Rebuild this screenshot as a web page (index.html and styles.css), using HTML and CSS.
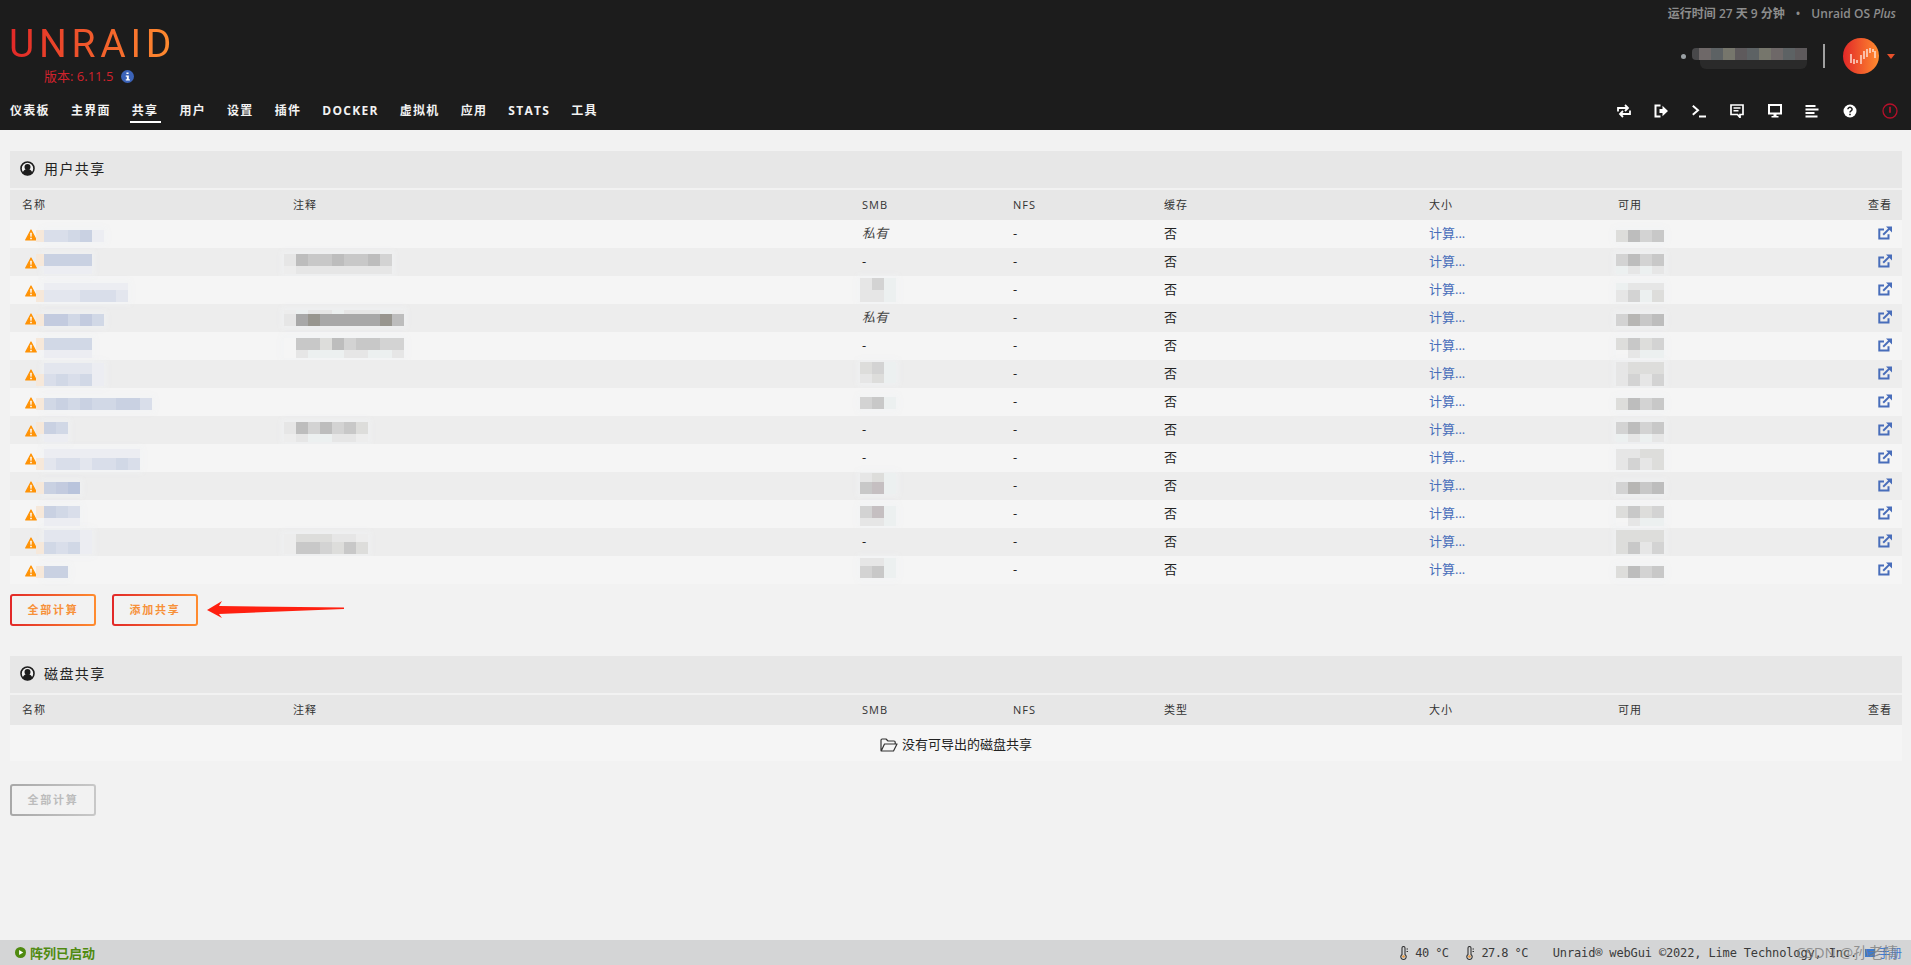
FILE: index.html
```html
<!DOCTYPE html>
<html lang="zh">
<head>
<meta charset="utf-8">
<title>Unraid 共享</title>
<link rel="stylesheet" href="styles.css">
</head>
<body>
<svg class="defs" width="0" height="0" aria-hidden="true">
  <defs>
    <symbol id="warn" viewBox="0 0 12 12"><path d="M6 1 11.3 11H.7z" fill="#ff9307" stroke="#ff9307" stroke-width="1.2" stroke-linejoin="round"/><path d="M5.2 3.8h1.6l-.2 4H5.4zM5.2 8.7h1.6v1.5H5.2z" fill="#fff"/></symbol>
    <symbol id="ext" viewBox="0 0 14 14"><path d="M10.5 8.2V12.5H1.3V3.5H6" fill="none" stroke="#486dba" stroke-width="2"/><path d="M5.2 8.8 11.6 2.4" fill="none" stroke="#486dba" stroke-width="2"/><path d="M8 .4h6v6z" fill="#486dba"/></symbol>
    <symbol id="user" viewBox="0 0 15 15"><circle cx="7.5" cy="7.5" r="6.5" fill="#f2f2f2" stroke="#1d1d1d" stroke-width="1.6"/><circle cx="7.5" cy="6" r="3" fill="#1d1d1d"/><path d="M2.8 12a4.7 4 0 0 1 9.4 0 6 6 0 0 1-9.4 0z" fill="#1d1d1d"/></symbol>
  </defs>
</svg>

<header class="hdr">
  <div class="hdr-top">
    <div class="brand">
      <div class="logo">UNRAID</div>
      <div class="ver">版本: 6.11.5
        <svg class="ver-i" viewBox="0 0 12 12"><circle cx="6" cy="6" r="6" fill="#3b63b8"/><path d="M5 2.2h2v1.6H5zM4.4 5h2.8v3.6h1v1.2H4.4V8.6h1V6.2h-1z" fill="#fff"/></svg>
      </div>
    </div>
    <div class="hdr-right">
      <div class="uptime"><span>运行时间 27 天 9 分钟</span><span class="dot">•</span><span>Unraid OS <em>Plus</em></span></div>
      <div class="server">
        <span class="srv-dot"></span>
        <div class="srv-name">
          <div class="mr"><i class="d0 half"></i><i class="d1"></i><i class="d2"></i><i class="d3"></i><i class="d4"></i><i class="d2"></i><i class="d3"></i><i class="d1"></i><i class="d2"></i><i class="d4"></i></div>
          <div class="srv-smear"></div>
        </div>
        <span class="srv-sep"></span>
        <svg class="avatar" viewBox="0 0 36 36">
          <defs><linearGradient id="ag" x1="0" x2="1" y1="0" y2="0"><stop offset="0" stop-color="#e22828"/><stop offset="1" stop-color="#ff8c2f"/></linearGradient></defs>
          <circle cx="18" cy="18" r="18" fill="url(#ag)"/>
          <path d="M8 16v9M11 21v5M14 22v3M18 17v9M21 13v8M24 11v8M27 10v5M30 11v3M32 13v7" stroke="#ffe6da" stroke-width="1.4" fill="none"/>
        </svg>
        <span class="caret"></span>
      </div>
    </div>
  </div>
  <div class="hdr-nav">
    <nav class="nav">
      <a>仪表板</a><a>主界面</a><a class="on">共享</a><a>用户</a><a>设置</a><a>插件</a><a>DOCKER</a><a>虚拟机</a><a>应用</a><a>STATS</a><a>工具</a>
    </nav>
    <div class="tools">
      <svg viewBox="0 0 14 14"><path d="M1 7.5V4h9M8 1 11 4 8 7M13 6.500V10H4M6 7 3 10l3 3" fill="none" stroke="#fff" stroke-width="1.8"/></svg>
      <svg viewBox="0 0 14 14"><path d="M6.500 1.500H1.500v11h5" fill="none" stroke="#fff" stroke-width="2"/><path d="M5.500 5H8.500V1.800L14 7 8.500 12.200V9H5.500z" fill="#fff"/></svg>
      <svg viewBox="0 0 14 14"><path d="M.8 1.800 6 6.300.8 10.800" fill="none" stroke="#fff" stroke-width="2"/><path d="M7 12.500h7" stroke="#fff" stroke-width="2"/></svg>
      <svg viewBox="0 0 14 14"><path d="M1 1h12v9.500H10v3L7.500 10.500H1z" fill="none" stroke="#fff" stroke-width="1.700"/><path d="M3.500 4h7M3.500 6.800h5" stroke="#fff" stroke-width="1.400"/></svg>
      <svg viewBox="0 0 14 14"><path d="M1 1h12v8.500H1z" fill="none" stroke="#fff" stroke-width="2"/><path d="M5.500 10h3v2h-3zM3.500 12h7v1.500h-7z" fill="#fff"/></svg>
      <svg viewBox="0 0 14 14"><path d="M.5 2h10M.5 5.500h13M.5 9h9M.5 12.500h12" stroke="#fff" stroke-width="2.200"/></svg>
      <svg viewBox="0 0 14 14"><circle cx="7" cy="7" r="6.500" fill="#fff"/><path d="M4.900 5.300a2.100 1.900 0 1 1 3.200 1.600C7.300 7.400 7 7.700 7 8.600" fill="none" stroke="#1c1c1c" stroke-width="1.500"/><path d="M6.200 9.700h1.600v1.500H6.200z" fill="#1c1c1c"/></svg>
      <svg viewBox="0 0 16 16"><circle cx="8" cy="8" r="7" fill="none" stroke="#b5102a" stroke-width="1.300"/><path d="M8 3.800v6" stroke="#b5102a" stroke-width="1.800"/></svg>
    </div>
  </div>
</header>

<main class="main">
  <section class="sec">
    <h2 class="title"><svg class="title-i"><use href="#user"/></svg>用户共享</h2>
    <table class="tbl">
      <colgroup><col class="c1"><col class="c2"><col class="c3"><col class="c3"><col class="c5"><col class="c6"><col class="c7"></colgroup>
      <thead><tr><th>名称</th><th>注释</th><th>SMB</th><th>NFS</th><th>缓存</th><th>大小</th><th>可用</th><th class="r">查看</th></tr></thead>
      <tbody>
        <tr>
          <td><div class="nm"><svg class="warn"><use href="#warn"/></svg><div class="mz t10"><div class="mr pe"><i class="a4"></i><i class="a4"></i><i class="a3"></i><i class="a2"></i><i class="a6"></i></div></div></div></td>
          <td></td><td><em>私有</em></td><td>-</td><td>否</td><td><a class="lnk">计算...</a></td>
          <td class="tp"><div class="mz av t10"><div class="mr"><i class="g5"></i><i class="g2"></i><i class="g4"></i><i class="g3"></i></div></div></td>
          <td class="r"><svg class="ext"><use href="#ext"/></svg></td>
        </tr>
        <tr>
          <td><div class="nm"><svg class="warn"><use href="#warn"/></svg><div class="mz t6"><div class="mr pe"><i class="a2"></i><i class="a2"></i><i class="a2"></i><i class="a2"></i></div><div class="mr sm"><i class="a6"></i><i class="a6"></i><i class="a6"></i><i class="a6"></i></div></div></div></td>
          <td class="tp"><div class="mz cm t6"><div class="mr"><i class="g6"></i><i class="g2"></i><i class="g3"></i><i class="g3"></i><i class="g2"></i><i class="g3"></i><i class="g3"></i><i class="g2"></i><i class="g4"></i></div><div class="mr sm"><i class="no"></i><i class="g6"></i><i class="g6"></i><i class="g6"></i><i class="g6"></i><i class="g6"></i><i class="g6"></i><i class="g6"></i><i class="g6"></i></div></div></td>
          <td>-</td><td>-</td><td>否</td><td><a class="lnk">计算...</a></td>
          <td class="tp"><div class="mz av t6"><div class="mr"><i class="g4"></i><i class="g2"></i><i class="g4"></i><i class="g3"></i></div><div class="mr sm"><i class="g7"></i><i class="g6"></i><i class="g7"></i><i class="g6"></i></div></div></td>
          <td class="r"><svg class="ext"><use href="#ext"/></svg></td>
        </tr>
        <tr>
          <td><div class="nm"><svg class="warn"><use href="#warn"/></svg><div class="mz t7"><div class="mr sm7"><i class="a6"></i><i class="a6"></i><i class="a6"></i><i class="a6"></i><i class="a6"></i><i class="a6"></i><i class="a6"></i></div><div class="mr pe"><i class="a5"></i><i class="a5"></i><i class="a5"></i><i class="a4"></i><i class="a4"></i><i class="a4"></i><i class="a5"></i></div></div></div></td>
          <td></td>
          <td class="tp"><div class="mz sb t2"><div class="mr"><i class="g6"></i><i class="g4"></i><i class="g7"></i></div><div class="mr"><i class="g6"></i><i class="g6"></i><i class="g7"></i></div></div></td>
          <td>-</td><td>否</td><td><a class="lnk">计算...</a></td>
          <td class="tp"><div class="mz av t7"><div class="mr sm7"><i class="g7"></i><i class="g6"></i><i class="g6"></i><i class="g6"></i></div><div class="mr"><i class="g6"></i><i class="g4"></i><i class="g7"></i><i class="g5"></i></div></div></td>
          <td class="r"><svg class="ext"><use href="#ext"/></svg></td>
        </tr>
        <tr>
          <td><div class="nm"><svg class="warn"><use href="#warn"/></svg><div class="mz t10"><div class="mr pe"><i class="a1"></i><i class="a1"></i><i class="a3"></i><i class="a1"></i><i class="a3"></i></div></div></div></td>
          <td class="tp"><div class="mz cm t6"><div class="mr sm4"><i class="no"></i><i class="g7"></i><i class="g6"></i><i class="g6"></i><i class="g7"></i><i class="g6"></i><i class="g6"></i><i class="g6"></i><i class="g7"></i></div><div class="mr"><i class="g6"></i><i class="g1"></i><i class="g0"></i><i class="g1"></i><i class="g1"></i><i class="g1"></i><i class="g1"></i><i class="g1"></i><i class="g0"></i><i class="g2"></i></div></div></td>
          <td><em>私有</em></td><td>-</td><td>否</td><td><a class="lnk">计算...</a></td>
          <td class="tp"><div class="mz av t10"><div class="mr"><i class="g4"></i><i class="g1b"></i><i class="g3"></i><i class="g2"></i></div></div></td>
          <td class="r"><svg class="ext"><use href="#ext"/></svg></td>
        </tr>
        <tr>
          <td><div class="nm"><svg class="warn"><use href="#warn"/></svg><div class="mz t6"><div class="mr pe"><i class="a3"></i><i class="a3"></i><i class="a3"></i><i class="a3"></i></div><div class="mr sm"><i class="a6"></i><i class="a6"></i><i class="a6"></i><i class="a6"></i></div></div></div></td>
          <td class="tp"><div class="mz cm t6"><div class="mr"><i class="no"></i><i class="g3"></i><i class="g3"></i><i class="g5"></i><i class="g2"></i><i class="g4"></i><i class="g3"></i><i class="g3"></i><i class="g4"></i><i class="g4"></i></div><div class="mr sm"><i class="no"></i><i class="g6"></i><i class="g7"></i><i class="g7"></i><i class="g7"></i><i class="g6"></i><i class="g6"></i><i class="g7"></i><i class="g7"></i><i class="g6"></i></div></div></td>
          <td>-</td><td>-</td><td>否</td><td><a class="lnk">计算...</a></td>
          <td class="tp"><div class="mz av t6"><div class="mr"><i class="g5"></i><i class="g3"></i><i class="g5"></i><i class="g4"></i></div><div class="mr sm"><i class="no"></i><i class="g6"></i><i class="g7"></i><i class="g7"></i></div></div></td>
          <td class="r"><svg class="ext"><use href="#ext"/></svg></td>
        </tr>
        <tr>
          <td><div class="nm"><svg class="warn"><use href="#warn"/></svg><div class="mz t3"><div class="mr h11"><i class="a5"></i><i class="a5"></i><i class="a5"></i><i class="a5"></i><i class="a6"></i></div><div class="mr pe"><i class="a4"></i><i class="a3"></i><i class="a4"></i><i class="a3"></i><i class="a6"></i></div></div></div></td>
          <td></td>
          <td class="tp"><div class="mz sb t2"><div class="mr"><i class="g5"></i><i class="g4"></i><i class="g7"></i></div><div class="mr sm9"><i class="g6"></i><i class="g5"></i><i class="g7"></i></div></div></td>
          <td>-</td><td>否</td><td><a class="lnk">计算...</a></td>
          <td class="tp"><div class="mz av t2"><div class="mr"><i class="g6"></i><i class="g5"></i><i class="g5"></i><i class="g5"></i></div><div class="mr"><i class="g6"></i><i class="g4"></i><i class="g6"></i><i class="g4"></i></div></div></td>
          <td class="r"><svg class="ext"><use href="#ext"/></svg></td>
        </tr>
        <tr>
          <td><div class="nm"><svg class="warn"><use href="#warn"/></svg><div class="mz t10"><div class="mr pe"><i class="a3"></i><i class="a2"></i><i class="a3"></i><i class="a2"></i><i class="a3"></i><i class="a3"></i><i class="a2"></i><i class="a2"></i><i class="a4"></i></div></div></div></td>
          <td></td>
          <td class="tp"><div class="mz sb t9"><div class="mr"><i class="g4"></i><i class="g3"></i><i class="g7"></i></div></div></td>
          <td>-</td><td>否</td><td><a class="lnk">计算...</a></td>
          <td class="tp"><div class="mz av t10"><div class="mr"><i class="g5"></i><i class="g2"></i><i class="g4"></i><i class="g3"></i></div></div></td>
          <td class="r"><svg class="ext"><use href="#ext"/></svg></td>
        </tr>
        <tr>
          <td><div class="nm"><svg class="warn"><use href="#warn"/></svg><div class="mz t6"><div class="mr pe"><i class="a2"></i><i class="a3"></i></div><div class="mr sm"><i class="a6"></i><i class="a6"></i></div></div></div></td>
          <td class="tp"><div class="mz cm t6"><div class="mr"><i class="g6"></i><i class="g2"></i><i class="g4"></i><i class="g2"></i><i class="g4"></i><i class="g3"></i><i class="g5"></i></div><div class="mr sm"><i class="no"></i><i class="g6"></i><i class="g7"></i><i class="g7"></i><i class="g6"></i><i class="g6"></i></div></div></td>
          <td>-</td><td>-</td><td>否</td><td><a class="lnk">计算...</a></td>
          <td class="tp"><div class="mz av t6"><div class="mr"><i class="g4"></i><i class="g2"></i><i class="g4"></i><i class="g3"></i></div><div class="mr sm"><i class="g7"></i><i class="g6"></i><i class="g7"></i><i class="g6"></i></div></div></td>
          <td class="r"><svg class="ext"><use href="#ext"/></svg></td>
        </tr>
        <tr>
          <td><div class="nm"><svg class="warn"><use href="#warn"/></svg><div class="mz t5"><div class="mr sm9"><i class="a6"></i><i class="a6"></i><i class="a6"></i><i class="a6"></i><i class="a6"></i><i class="a6"></i><i class="a6"></i><i class="a6"></i></div><div class="mr pe"><i class="a5"></i><i class="a4"></i><i class="a4"></i><i class="a5"></i><i class="a4"></i><i class="a4"></i><i class="a3"></i><i class="a4"></i></div></div></div></td>
          <td></td>
          <td>-</td><td>-</td><td>否</td><td><a class="lnk">计算...</a></td>
          <td class="tp"><div class="mz av t5"><div class="mr sm9"><i class="g6"></i><i class="g6"></i><i class="g5"></i><i class="g5"></i></div><div class="mr"><i class="g6"></i><i class="g4"></i><i class="g6"></i><i class="g5"></i></div></div></td>
          <td class="r"><svg class="ext"><use href="#ext"/></svg></td>
        </tr>
        <tr>
          <td><div class="nm"><svg class="warn"><use href="#warn"/></svg><div class="mz t10"><div class="mr pe"><i class="a2"></i><i class="a1"></i><i class="a0"></i></div></div></div></td>
          <td></td>
          <td class="tp"><div class="mz sb t1"><div class="mr sm9"><i class="g6"></i><i class="g5"></i><i class="g7"></i></div><div class="mr"><i class="g3"></i><i class="g2b"></i><i class="g7"></i></div></div></td>
          <td>-</td><td>否</td><td><a class="lnk">计算...</a></td>
          <td class="tp"><div class="mz av t10"><div class="mr"><i class="g4"></i><i class="g1b"></i><i class="g3"></i><i class="g2"></i></div></div></td>
          <td class="r"><svg class="ext"><use href="#ext"/></svg></td>
        </tr>
        <tr>
          <td><div class="nm"><svg class="warn"><use href="#warn"/></svg><div class="mz t6"><div class="mr pe"><i class="a2"></i><i class="a3"></i><i class="a4"></i></div><div class="mr sm"><i class="a6"></i><i class="a6"></i><i class="a6"></i></div></div></div></td>
          <td></td>
          <td class="tp"><div class="mz sb t6"><div class="mr"><i class="g4"></i><i class="g2b"></i><i class="g7"></i></div><div class="mr sm"><i class="g6"></i><i class="g6"></i><i class="g7"></i></div></div></td>
          <td>-</td><td>否</td><td><a class="lnk">计算...</a></td>
          <td class="tp"><div class="mz av t6"><div class="mr"><i class="g5"></i><i class="g3"></i><i class="g5"></i><i class="g4"></i></div><div class="mr sm"><i class="no"></i><i class="g6"></i><i class="g7"></i><i class="g7"></i></div></div></td>
          <td class="r"><svg class="ext"><use href="#ext"/></svg></td>
        </tr>
        <tr>
          <td><div class="nm"><svg class="warn"><use href="#warn"/></svg><div class="mz t2"><div class="mr"><i class="a5"></i><i class="a5"></i><i class="a5"></i><i class="a6"></i></div><div class="mr pe"><i class="a3"></i><i class="a4"></i><i class="a3"></i><i class="a6"></i></div></div></div></td>
          <td class="tp"><div class="mz cm t6"><div class="mr sm"><i class="no"></i><i class="g5"></i><i class="g5"></i><i class="g5"></i><i class="g6"></i><i class="g6"></i></div><div class="mr"><i class="no"></i><i class="g3"></i><i class="g3"></i><i class="g4"></i><i class="g5"></i><i class="g3"></i><i class="g5"></i></div></div></td>
          <td>-</td><td>-</td><td>否</td><td><a class="lnk">计算...</a></td>
          <td class="tp"><div class="mz av t2"><div class="mr"><i class="g5"></i><i class="g5"></i><i class="g5"></i><i class="g5"></i></div><div class="mr"><i class="g5"></i><i class="g3"></i><i class="g6"></i><i class="g4"></i></div></div></td>
          <td class="r"><svg class="ext"><use href="#ext"/></svg></td>
        </tr>
        <tr>
          <td><div class="nm"><svg class="warn"><use href="#warn"/></svg><div class="mz t10"><div class="mr pe"><i class="a2"></i><i class="a2"></i></div></div></div></td>
          <td></td>
          <td class="tp"><div class="mz sb t2"><div class="mr sm"><i class="g6"></i><i class="g6"></i><i class="g7"></i></div><div class="mr"><i class="g4"></i><i class="g3"></i><i class="g7"></i></div></div></td>
          <td>-</td><td>否</td><td><a class="lnk">计算...</a></td>
          <td class="tp"><div class="mz av t10"><div class="mr"><i class="g5"></i><i class="g2"></i><i class="g4"></i><i class="g3"></i></div></div></td>
          <td class="r"><svg class="ext"><use href="#ext"/></svg></td>
        </tr>
      </tbody>
    </table>
    <div class="actions">
      <button class="btn">全部计算</button>
      <button class="btn">添加共享</button>
      <svg class="arrow" viewBox="0 0 138 18"><path d="M0 9 15 0 12 5 137 6.500V8L12 13 15 17z" fill="#ff2010"/></svg>
    </div>
  </section>

  <section class="sec sec2">
    <h2 class="title"><svg class="title-i"><use href="#user"/></svg>磁盘共享</h2>
    <table class="tbl">
      <colgroup><col class="c1"><col class="c2"><col class="c3"><col class="c3"><col class="c5"><col class="c6"><col class="c7"></colgroup>
      <thead><tr><th>名称</th><th>注释</th><th>SMB</th><th>NFS</th><th>类型</th><th>大小</th><th>可用</th><th class="r">查看</th></tr></thead>
      <tbody>
        <tr class="empty"><td colspan="8"><svg class="folder" viewBox="0 0 18 14"><path d="M1 12.800V2.200C1 1.500 1.500 1 2.200 1H6l2 2h6c.7 0 1.200.5 1.200 1.200V5.500M1.200 13H13.500L17 6H4.500z" fill="none" stroke="#333" stroke-width="1.200" stroke-linejoin="round"/></svg>没有可导出的磁盘共享</td></tr>
      </tbody>
    </table>
    <div class="actions act2"><button class="btn off" disabled>全部计算</button></div>
  </section>
</main>

<footer class="ftr">
  <div class="status">
    <svg class="play" viewBox="0 0 12 12"><circle cx="6" cy="6" r="6" fill="#4f8a10"/><path d="M4.500 3.200 9 6 4.500 8.800z" fill="#fff"/></svg>阵列已启动
  </div>
  <div class="ftr-right">
    <span class="temp"><svg class="therm" viewBox="0 0 8 14"><path d="M2 2a1.500 1.500 0 0 1 3 0v6.500a2.700 2.700 0 1 1-3 0z" fill="none" stroke="#333" stroke-width="1.100"/><circle cx="3.500" cy="10.500" r="1.300" fill="#e8963a"/><path d="M6.500 3h1.500M6.500 5.500h1.500" stroke="#333"/></svg><span>40 °C</span></span>
    <span class="temp"><svg class="therm" viewBox="0 0 8 14"><path d="M2 2a1.500 1.500 0 0 1 3 0v6.500a2.700 2.700 0 1 1-3 0z" fill="none" stroke="#333" stroke-width="1.100"/><circle cx="3.500" cy="10.500" r="1.300" fill="#e8963a"/><path d="M6.500 3h1.500M6.500 5.500h1.500" stroke="#333"/></svg><span>27.8 °C</span></span>
    <span class="copy">Unraid® webGui ©2022, Lime Technology, Inc.</span>
    <span class="manual"><svg class="book" viewBox="0 0 10 10"><path d="M0 1h10v8H0z" fill="#3f7bd0"/></svg>手册</span>
  </div>
  <span class="wm">CSDN @孙老情</span>
</footer>
</body>
</html>
```

FILE: styles.css
```css
* { box-sizing: border-box; }
html, body { margin: 0; padding: 0; height: 100%; }
body {
  width: 1911px;
  height: 965px;
  overflow: hidden;
  display: flex;
  flex-direction: column;
  background: #f2f2f2;
  color: #222;
  font-family: "Open Sans", "Noto Sans CJK SC", sans-serif;
  font-size: 13px;
}
.defs { position: absolute; }

/* header */
.hdr { height: 130px; background: #1c1c1c; flex: none; display: flex; flex-direction: column; }
.hdr-top { height: 100px; display: flex; justify-content: space-between; }
.brand { padding: 22px 0 0 9px; }
.logo {
  font-family: Roboto, "Open Sans", sans-serif;
  font-size: 39px;
  line-height: 44px;
  letter-spacing: 4.700px;
  width: 172px;
  background: linear-gradient(90deg, #e22828, #ff8c2f 95%);
  -webkit-background-clip: text;
  background-clip: text;
  color: transparent;
}
.ver {
  margin: 1px 0 0 35px;
  display: flex;
  align-items: center;
  gap: 8px;
  color: #d0222c;
  font-size: 13px;
  line-height: 18px;
  white-space: nowrap;
}
.ver-i { width: 13px; height: 13px; }
.hdr-right { display: flex; flex-direction: column; align-items: flex-end; padding: 6px 15px 0 0; }
.uptime { display: flex; gap: 9px; color: #8d8d8d; font-size: 12px; line-height: 16px; font-weight: 600; white-space: nowrap; }
.uptime .dot { margin: 0 2px; }
.server { display: flex; align-items: center; margin: 16px 1px 0 0; height: 36px; }
.srv-dot { width: 5px; height: 5px; border-radius: 50%; background: #9aa0a4; margin-right: 6px; }
.srv-name { width: 115px; height: 21px; align-self: flex-start; margin-top: 10px; }
.srv-smear { height: 9px; margin-left: 8px; background: #2a2a2a; border-radius: 0 0 6px 6px; }
.srv-sep { width: 2px; height: 24px; background: #a0a0a0; margin: 0 18px 0 16px; }
.avatar { width: 36px; height: 36px; }
.caret { width: 0; height: 0; border: 4px solid transparent; border-top: 5px solid #e8502a; border-bottom: 0; margin-left: 8px; }
.hdr-nav { height: 30px; display: flex; justify-content: space-between; align-items: flex-start; }
.nav { display: flex; gap: 21px; padding: 2px 0 0 10px; }
.nav a { position: relative; color: #f2f2f2; font-size: 12px; font-weight: 700; letter-spacing: 1.300px; line-height: 18px; white-space: nowrap; }
.nav a.on::after { content: ""; position: absolute; left: -2px; right: -3px; top: 19px; height: 2px; background: #fff; }
.tools { display: flex; gap: 23.700px; align-items: center; padding: 3px 13px 0 0; }
.tools svg { width: 14px; height: 14px; display: block; }
.tools svg:last-child { width: 16px; height: 16px; margin-left: 1.400px; }

/* main */
.main { flex: 1; padding: 21px 9px 0 10px; }
.sec2 { margin-top: 30px; }
.title {
  display: flex;
  align-items: center;
  height: 37px;
  margin: 0 0 2px;
  padding: 0 0 3px 10px;
  background: #e7e7e7;
  color: #222;
  font-size: 14px;
  font-weight: 400;
  letter-spacing: 1.400px;
}
.title-i { width: 15px; height: 15px; margin-right: 9px; }
.tbl { width: 100%; border-collapse: collapse; table-layout: fixed; }
.c1 { width: 271px; } .c2 { width: 569px; } .c3 { width: 151px; } .c5 { width: 265px; } .c6 { width: 189px; } .c7 { width: 150px; }
th {
  height: 30px;
  padding: 0 12px 2px;
  background: #e7e7e7;
  font-size: 11px;
  font-weight: 400;
  letter-spacing: 1px;
  text-align: left;
  color: #333;
}
td { height: 28px; padding: 0 12px 1px; line-height: 15px; vertical-align: middle; color: #222; }
td.tp, td:first-child { vertical-align: top; padding-bottom: 0; }
.r { text-align: right; }
th.r { padding-right: 10px; }
tbody tr:nth-child(odd) { background: #f5f5f5; }
tbody tr:nth-child(even) { background: #ededed; }
td em { font-style: italic; color: #444; }
.lnk { color: #486dba; }
.ext { width: 14px; height: 14px; display: block; margin: -1px -2px 0 auto; }
.nm { display: flex; height: 28px; align-items: flex-start; padding-left: 3px; }
.warn { width: 12px; height: 12px; flex: none; margin: 9px 7px 0 0; }

/* pixelated (redacted) cells */
.mz { display: flex; flex-direction: column; width: max-content; box-shadow: 0 0 5px 3px rgba(241, 242, 244, .55); }
.t1 { margin-top: 1px; } .t2 { margin-top: 2px; } .t3 { margin-top: 3px; } .t5 { margin-top: 5px; } .t6 { margin-top: 6px; } .t7 { margin-top: 7px; } .t9 { margin-top: 9px; } .t10 { margin-top: 10px; }
.cm { margin-left: -9px; }
.sb, .av { margin-left: -2px; }
.mr { display: flex; height: 12px; position: relative; }
.mr.sm { height: 8px; } .mr.sm7 { height: 7px; } .mr.sm4 { height: 4px; } .mr.sm9 { height: 9px; } .mr.h11 { height: 11px; }
.mr.pe::before { content: ""; position: absolute; left: -8px; top: 0; width: 8px; height: 12px; background: #f6e8da; }
.mr i { display: block; width: 12px; height: 100%; flex: none; }
.mr i.half { width: 7px; border-radius: 4px 0 0 4px; }
.no { background: transparent; }
.a0 { background: #b9c4dc; } .a1 { background: #c3cbdf; } .a2 { background: #c9d1e2; } .a3 { background: #d1d8e6; } .a4 { background: #d9deea; } .a5 { background: #e3e6ee; } .a6 { background: #ecedf2; }
.g0 { background: #98968f; } .g1 { background: #a8a8a8; } .g1b { background: #b7b6b4; } .g2 { background: #bdbdbd; } .g2b { background: #c5bfc1; } .g3 { background: #c8c8c8; } .g4 { background: #d3d3d3; } .g5 { background: #dddddb; } .g6 { background: #e6e6e6; } .g7 { background: #ecf0f0; }
.d0 { background: #48484a; } .d1 { background: #6e6868; } .d2 { background: #5d6264; } .d3 { background: #76766c; } .d4 { background: #5e5a5c; }

/* actions */
.actions { display: flex; align-items: center; gap: 16px; margin-top: 10px; }
.act2 { margin-top: 23px; }
.btn {
  width: 86px;
  height: 32px;
  padding: 0 0 2px;
  border: 2px solid transparent;
  border-radius: 3px;
  background: linear-gradient(#f2f2f2, #f2f2f2) padding-box, linear-gradient(90deg, #e22828, #ff8c2f) border-box;
  color: #f7913a;
  font-family: inherit;
  font-size: 11px;
  font-weight: 700;
  letter-spacing: 1.800px;
}
.btn.off { background: linear-gradient(#f2f2f2, #f2f2f2) padding-box, linear-gradient(90deg, #a8a8a8, #c8c8c8) border-box; color: #bcbcbc; }
.arrow { width: 138px; height: 18px; margin-left: -7px; }
.empty td { height: 36px; padding: 3px 12px 0; text-align: center; vertical-align: middle; background: #f5f5f5; }
.folder { width: 18px; height: 14px; vertical-align: -3px; margin-right: 4px; }

/* footer */
.ftr { position: relative; flex: none; height: 25px; background: #d4d5d6; display: flex; justify-content: space-between; align-items: center; padding: 0 9px 0 15px; }
.status { display: flex; align-items: center; gap: 4px; color: #4f8a10; font-weight: 700; font-size: 13px; }
.play { width: 11px; height: 11px; }
.ftr-right { display: flex; align-items: center; color: #3a3a3a; font-family: "DejaVu Sans Mono", "Noto Sans CJK SC", monospace; font-size: 12px; }
.temp { display: flex; align-items: center; gap: 7px; margin-right: 18px; letter-spacing: -.6px; }
.temp:nth-child(2) { margin-right: 25px; }
.therm { width: 8px; height: 14px; }
.copy { letter-spacing: -.15px; }
.manual { display: flex; align-items: center; gap: 3px; margin-left: 8px; color: #3f7bd0; font-size: 12px; }
.book { width: 10px; height: 10px; }
.wm { position: absolute; left: 1796px; top: 1px; color: rgba(125, 125, 125, .8); font-size: 15px; white-space: nowrap; }
```
